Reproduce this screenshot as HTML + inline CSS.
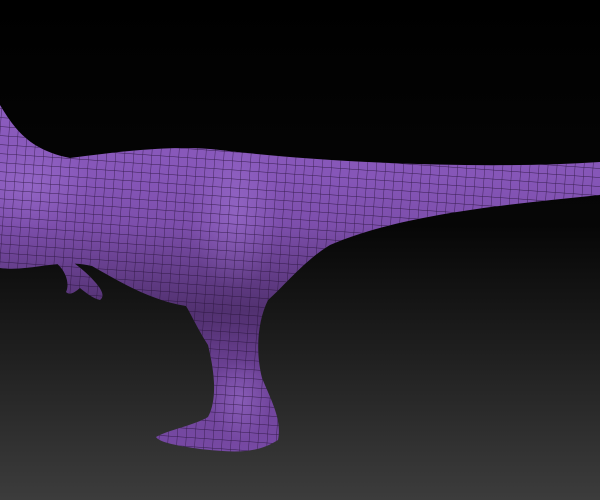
<!DOCTYPE html>
<html><head><style>
html,body{margin:0;padding:0;width:600px;height:500px;overflow:hidden;background:#000}
</style></head><body>
<svg width="600" height="500" viewBox="0 0 600 500" xmlns="http://www.w3.org/2000/svg">
<defs>
<linearGradient id="bg" x1="0" y1="0" x2="0" y2="1">
<stop offset="0" stop-color="#000"/><stop offset="0.45" stop-color="#060606"/><stop offset="1" stop-color="#3c3c3c"/>
</linearGradient>
<linearGradient id="body" x1="0" y1="0" x2="0" y2="1">
<stop offset="0" stop-color="#9466c8"/><stop offset="0.35" stop-color="#8656b8"/><stop offset="0.65" stop-color="#6a3f92"/><stop offset="1" stop-color="#7b4daa"/>
</linearGradient>
<radialGradient id="hl" cx="0.5" cy="0.5" r="0.5">
<stop offset="0" stop-color="#a57ad8" stop-opacity="0.45"/><stop offset="1" stop-color="#a57ad8" stop-opacity="0"/>
</radialGradient>
<linearGradient id="sh" x1="0" y1="0" x2="0" y2="1">
<stop offset="0.45" stop-color="#000" stop-opacity="0"/><stop offset="0.62" stop-color="#000" stop-opacity="0.25"/><stop offset="0.75" stop-color="#000" stop-opacity="0"/>
</linearGradient>
<pattern id="grid" width="9" height="9" patternUnits="userSpaceOnUse" patternTransform="rotate(4)">
<path d="M9 0H0V9" fill="none" stroke="#241036" stroke-width="0.9" opacity="0.8"/>
</pattern>
<clipPath id="c"><path d="M0,105 C15,130 30,150 70,158 C130,150 180,145 220,150 C320,162 480,170 600,162 L600,195 C500,205 400,215 330,245 C305,260 285,285 268,300 C258,320 255,350 262,378 C272,402 282,420 278,440 C255,455 230,452 200,449 C180,446 160,443 156,437 C168,430 195,425 208,417 C218,398 214,370 208,345 C196,326 190,312 186,306 C150,300 120,282 92,266 C60,258 30,272 0,268 Z"/>
<path d="M55,250 C70,260 85,270 95,282 C102,290 105,296 100,300 C92,298 85,292 80,288 C75,292 70,296 66,292 C70,284 66,270 55,262 Z"/></clipPath>
</defs>
<rect width="600" height="500" fill="url(#bg)"/>
<g clip-path="url(#c)">
<rect width="600" height="500" fill="url(#body)"/>
<rect width="600" height="500" fill="url(#sh)"/>
<ellipse cx="235" cy="215" rx="45" ry="75" fill="url(#hl)"/>
<ellipse cx="30" cy="185" rx="60" ry="45" fill="url(#hl)"/>
<ellipse cx="240" cy="400" rx="30" ry="40" fill="url(#hl)"/>
<rect width="600" height="500" fill="url(#grid)"/>
</g>
</svg>
</body></html>
